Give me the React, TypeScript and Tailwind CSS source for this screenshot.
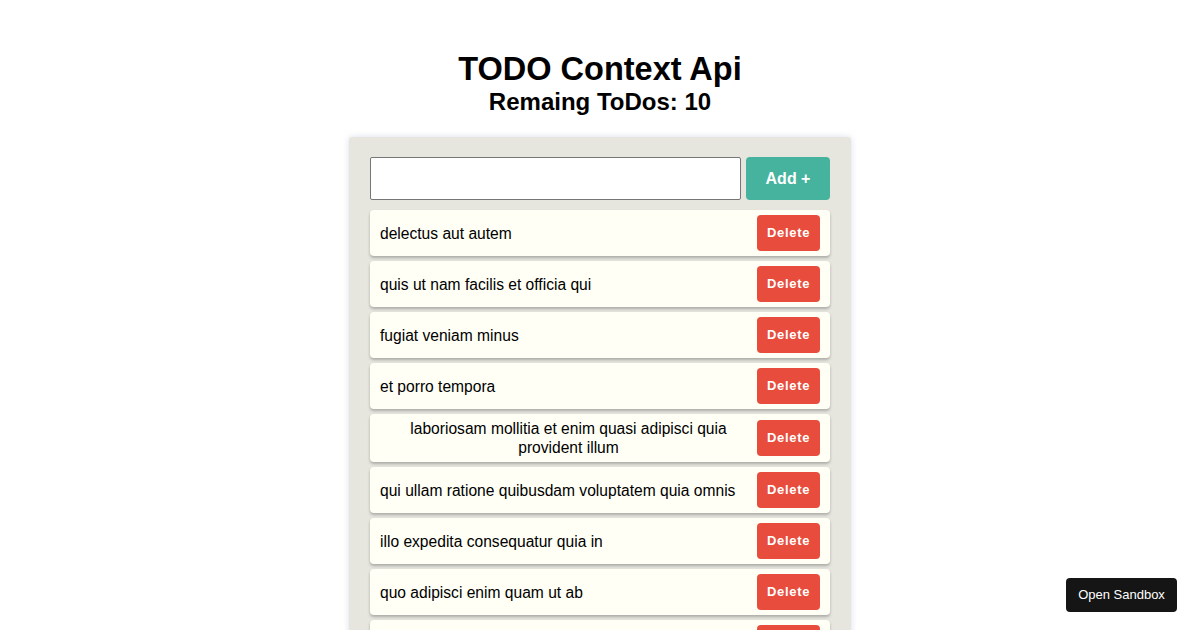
const todos = [
  'delectus aut autem',
  'quis ut nam facilis et officia qui',
  'fugiat veniam minus',
  'et porro tempora',
  'laboriosam mollitia et enim quasi adipisci quia provident illum',
  'qui ullam ratione quibusdam voluptatem quia omnis',
  'illo expedita consequatur quia in',
  'quo adipisci enim quam ut ab',
  'molestiae perspiciatis ipsa',
  'illo est ratione doloremque quia maiores aut',
];

function TodoItem({ title }: { title: string }) {
  return (
    <li className="mb-[5px] flex items-center justify-between rounded bg-[#fffff6] py-[5px] pl-[10px] pr-[10px] shadow-[0_2px_3px_rgba(0,0,0,0.25)]">
      <span className="text-center text-[15.6px] leading-[19px] text-black">{title}</span>
      <button className="h-[36px] w-[63px] shrink-0 rounded bg-[#e74c3c] text-[13px] font-bold tracking-[0.7px] text-white">
        Delete
      </button>
    </li>
  );
}

export default function App() {
  return (
    <div
      className="relative h-[630px] overflow-hidden bg-white text-center"
      style={{ fontFamily: '"Liberation Sans", Arial, sans-serif' }}
    >
      <div className="flex flex-col items-center pt-[51px]">
        <h1 className="text-[32.5px] font-bold leading-[37px] text-black">TODO Context Api</h1>
        <h2 className="text-[24px] font-bold leading-[28px] text-black">Remaing ToDos: 10</h2>

        <div className="mt-[21px] w-[502px] rounded-[3px] bg-[#e6e6df] px-[21px] pt-[20px] shadow-[0_0_6px_rgba(150,160,200,0.35)]">
          <form className="mb-[10px] flex gap-[5px]" onSubmit={(e) => e.preventDefault()}>
            <input
              type="text"
              className="h-[43px] flex-1 rounded-[2px] border border-[#767676] bg-white px-2"
            />
            <button className="h-[43px] w-[84px] rounded bg-[#45b39d] text-[16px] font-bold text-white">
              Add +
            </button>
          </form>
          <ul>
            {todos.map((t) => (
              <TodoItem key={t} title={t} />
            ))}
          </ul>
        </div>
      </div>

      <button className="absolute bottom-[18px] right-[23px] h-[34px] w-[111px] rounded-[4px] bg-[#151515] text-[13px] text-white">
        Open Sandbox
      </button>
    </div>
  );
}
